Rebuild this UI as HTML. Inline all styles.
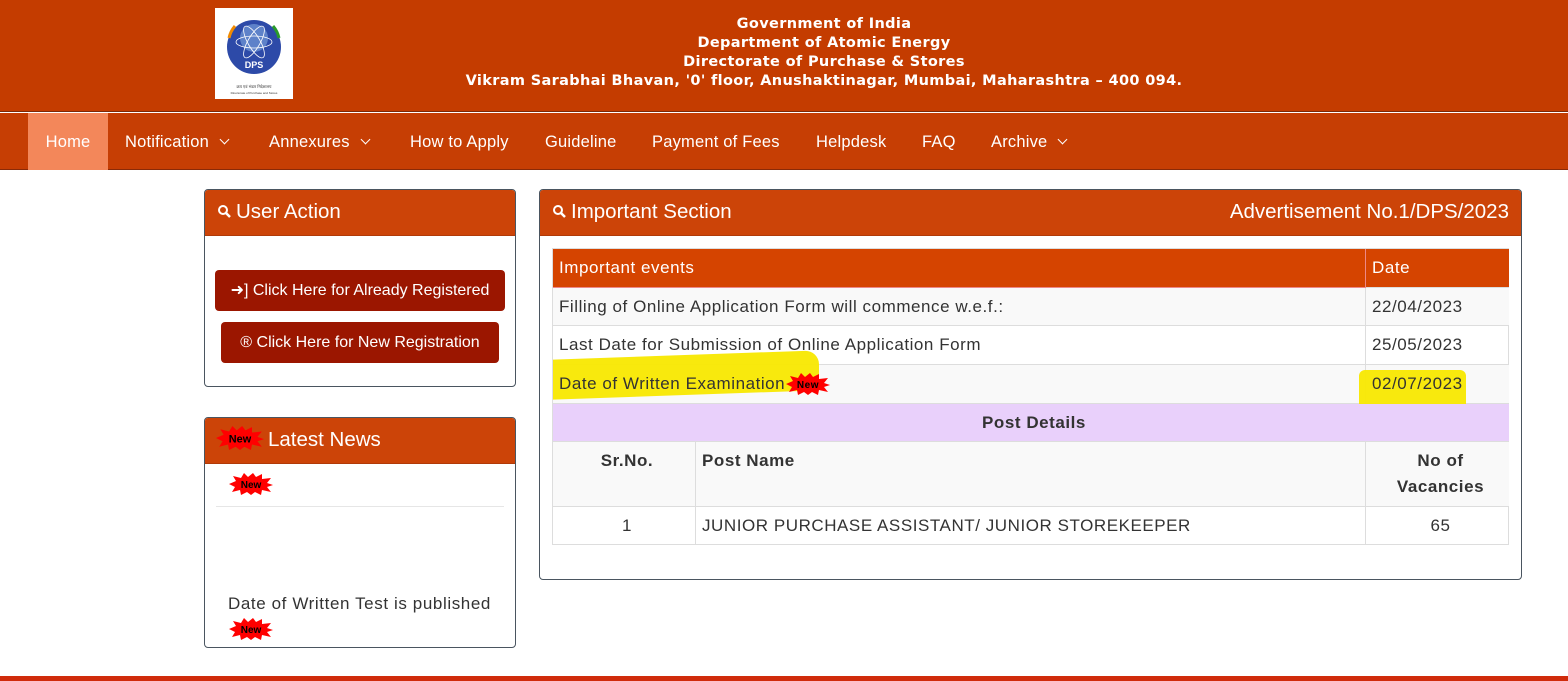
<!DOCTYPE html>
<html><head><meta charset="utf-8"><style>
*{box-sizing:border-box;margin:0;padding:0}
body{width:1568px;height:681px;overflow:hidden;background:#fff;font-family:"Liberation Sans",sans-serif;position:relative;color:#333}
.abs{position:absolute}
#hdr{left:0;top:0;width:1568px;height:112px;background:#c43c00;border-bottom:1px solid #7a2a0a}
#hdr .t{position:absolute;left:0;width:1648px;text-align:center;color:#fff;font-family:"DejaVu Sans",sans-serif;font-weight:bold;font-size:14.5px;letter-spacing:0.35px;line-height:19px;top:15px}
#nav{left:0;top:113px;width:1568px;height:57px;background:#c63e04;border-bottom:1px solid #8a2a08}
#nav span{position:absolute;top:0;height:57px;line-height:58px;color:#fff;font-size:16.5px;letter-spacing:0.2px}
.chev{display:inline-block;width:7px;height:7px;border-right:1.5px solid #fff;border-bottom:1.5px solid #fff;transform:rotate(45deg);margin-left:12px;position:relative;top:-4px}
.panel{position:absolute;border:1px solid #4a5560;border-radius:4px;background:#fff;overflow:hidden}
.ph{background:#cc4408;color:#fff;height:46px;font-size:20.5px;line-height:44px;padding-left:12px;border-bottom:1px solid #b03a08}
.btn{position:absolute;background:#9b1600;color:#fff;border-radius:4px;font-size:16px;text-align:center;line-height:41px;height:41px}
.cell{position:absolute;font-size:17px;letter-spacing:0.55px;color:#333;padding-left:6px;border-right:1px solid #ddd;border-bottom:1px solid #ddd}
.hl{position:absolute;background:#f8e800;opacity:.95}
</style></head><body>
<div id="hdr" class="abs">
 <div class="abs" style="left:215px;top:8px;width:78px;height:91px;background:#fff">
  <svg width="78" height="91" viewBox="0 0 78 91"><circle cx="39" cy="39" r="27" fill="#2d4aa8"/><circle cx="39" cy="30" r="14" fill="#7fa8e0" opacity=".6"/><ellipse cx="39" cy="34" rx="18" ry="6" fill="none" stroke="#fff" stroke-width=".8"/><ellipse cx="39" cy="34" rx="18" ry="6" fill="none" stroke="#fff" stroke-width=".8" transform="rotate(60 39 34)"/><ellipse cx="39" cy="34" rx="18" ry="6" fill="none" stroke="#fff" stroke-width=".8" transform="rotate(-60 39 34)"/><path d="M14 30 A27 27 0 0 1 20 18" stroke="#f08a00" stroke-width="3" fill="none"/><path d="M64 30 A27 27 0 0 0 58 18" stroke="#2a9a2a" stroke-width="3" fill="none"/><text x="39" y="60" font-size="9" font-weight="bold" fill="#fff" text-anchor="middle" font-family="Liberation Sans">DPS</text><text x="39" y="80" font-size="4" fill="#333" text-anchor="middle">क्रय एवं भंडार निदेशालय</text><text x="39" y="86" font-size="3" fill="#333" text-anchor="middle">Directorate of Purchase and Stores</text></svg>
 </div>
 <div class="t">Government of India<br>Department of Atomic Energy<br>Directorate of Purchase &amp; Stores<br>Vikram Sarabhai Bhavan, '0' floor, Anushaktinagar, Mumbai, Maharashtra – 400 094.</div>
</div>
<div id="nav" class="abs">
 <span style="left:28px;width:80px;background:#f3875a;text-align:center">Home</span>
 <span style="left:125px">Notification<i class="chev"></i></span>
 <span style="left:269px">Annexures<i class="chev"></i></span>
 <span style="left:410px">How to Apply</span>
 <span style="left:545px">Guideline</span>
 <span style="left:652px">Payment of Fees</span>
 <span style="left:816px">Helpdesk</span>
 <span style="left:922px">FAQ</span>
 <span style="left:991px">Archive<i class="chev"></i></span>
</div>

<svg width="0" height="0" style="position:absolute"><defs><symbol id="nw" viewBox="0 0 44 22"><polygon points="0,11 7,8 4,3 12,5 15,0 19,4 24,0 27,4 33,1 33,6 42,5 38,10 44,12 38,14 42,19 33,17 32,22 26,19 22,22 18,19 12,22 11,17 3,19 6,14" fill="#f00"/><text x="22" y="15" font-size="10" font-weight="bold" text-anchor="middle" font-family="Liberation Sans" fill="#000">New</text></symbol></defs></svg>

<div class="panel" style="left:204px;top:189px;width:312px;height:198px">
 <div class="ph"><svg width="14" height="14" viewBox="0 0 14 14" style="margin-right:5px"><circle cx="6" cy="6" r="4" stroke="#fff" stroke-width="2" fill="none"/><path d="M9 9l4 4" stroke="#fff" stroke-width="2.5"/></svg>User Action</div>
</div>
<div class="btn" style="left:215px;top:270px;width:290px">➜] Click Here for Already Registered</div>
<div class="btn" style="left:221px;top:322px;width:278px">® Click Here for New Registration</div>

<div class="panel" style="left:204px;top:417px;width:312px;height:231px">
 <div class="ph" style="padding-left:11px"><svg width="48" height="24" style="vertical-align:-4px;margin-right:4px"><use href="#nw"/></svg>Latest News</div>
 <svg class="abs" width="44" height="22" style="left:24px;top:55px"><use href="#nw"/></svg>
 <div class="abs" style="left:11px;top:88px;width:288px;height:1px;background:#e6e6e6"></div>
 <div class="abs" style="left:23px;top:176px;font-size:17px;letter-spacing:0.6px;color:#333">Date of Written Test is published</div>
 <svg class="abs" width="44" height="22" style="left:24px;top:200px"><use href="#nw"/></svg>
</div>

<div class="panel" style="left:539px;top:189px;width:983px;height:391px">
 <div class="ph"><svg width="14" height="14" viewBox="0 0 14 14" style="margin-right:5px"><circle cx="6" cy="6" r="4" stroke="#fff" stroke-width="2" fill="none"/><path d="M9 9l4 4" stroke="#fff" stroke-width="2.5"/></svg>Important Section<span style="position:absolute;right:12px">Advertisement No.1/DPS/2023</span></div>
</div>
<div class="abs" style="left:552px;top:248px;width:957px;height:297px;border:1px solid #ddd">
 <div class="cell" style="left:0;top:0;width:813px;height:39px;background:#d54400;color:#fff;line-height:38px;border-color:#e88">Important events</div>
 <div class="cell" style="left:813px;top:0;width:143px;height:39px;background:#d54400;color:#fff;line-height:38px;border-right:0">Date</div>
 <div class="cell" style="left:0;top:39px;width:813px;height:38px;background:#f9f9f9;line-height:38px">Filling of Online Application Form will commence w.e.f.:</div>
 <div class="cell" style="left:813px;top:39px;width:143px;height:38px;background:#f9f9f9;line-height:38px;border-right:0">22/04/2023</div>
 <div class="cell" style="left:0;top:77px;width:813px;height:39px;line-height:38px">Last Date for Submission of Online Application Form</div>
 <div class="cell" style="left:813px;top:77px;width:143px;height:39px;line-height:38px;border-right:0">25/05/2023</div>
 <div class="cell" style="left:0;top:116px;width:813px;height:39px;background:#f9f9f9"></div>
 <div class="cell" style="left:813px;top:116px;width:143px;height:39px;background:#f9f9f9;border-right:0"></div>
 <div class="hl" style="left:0;top:106px;width:266px;height:40px;border-radius:0 14px 4px 0;transform:skewY(-2deg)"></div>
 <div class="hl" style="left:806px;top:121px;width:107px;height:40px;border-radius:6px"></div>
 <div class="abs" style="left:6px;top:116px;line-height:38px;font-size:17px;letter-spacing:0.55px;color:#333">Date of Written Examination <svg width="44" height="22" style="vertical-align:-6px;margin-left:-4px"><use href="#nw"/></svg></div>
 <div class="abs" style="left:819px;top:116px;line-height:38px;font-size:17px;letter-spacing:0.55px;color:#333">02/07/2023</div>
 <div class="cell" style="left:0;top:155px;width:956px;height:38px;background:#e9d0fb;text-align:center;font-weight:bold;line-height:37px;border-right:0">Post Details</div>
 <div class="cell" style="left:0;top:193px;width:143px;height:65px;background:#f9f9f9;text-align:center;font-weight:bold;padding-top:9px">Sr.No.</div>
 <div class="cell" style="left:143px;top:193px;width:670px;height:65px;background:#f9f9f9;font-weight:bold;padding-top:9px">Post Name</div>
 <div class="cell" style="left:813px;top:193px;width:143px;height:65px;background:#f9f9f9;text-align:center;font-weight:bold;padding-top:6px;line-height:26px;border-right:0">No of<br>Vacancies</div>
 <div class="cell" style="left:0;top:258px;width:143px;height:38px;text-align:center;line-height:37px;border-bottom:0">1</div>
 <div class="cell" style="left:143px;top:258px;width:670px;height:38px;line-height:37px;border-bottom:0">JUNIOR PURCHASE ASSISTANT/ JUNIOR STOREKEEPER</div>
 <div class="cell" style="left:813px;top:258px;width:143px;height:38px;text-align:center;line-height:37px;border:0">65</div>
</div>
<div class="abs" style="left:0;top:676px;width:1568px;height:5px;background:#d02b0b"></div>
</body></html>
